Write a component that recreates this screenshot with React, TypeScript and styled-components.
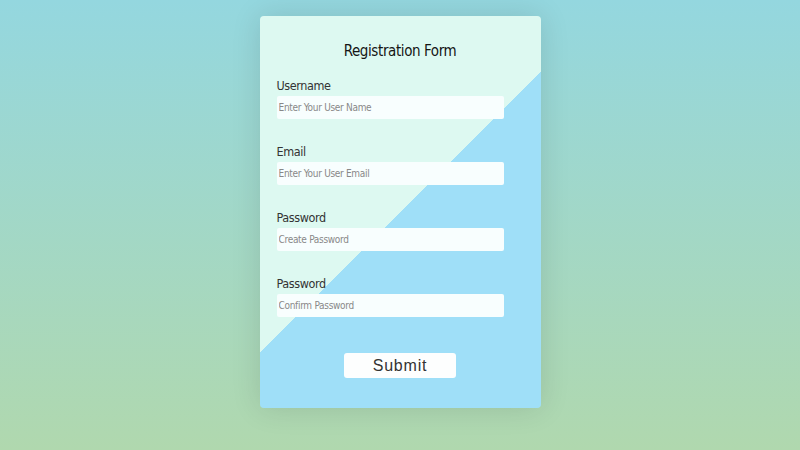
import React from 'react'
import styled, { createGlobalStyle } from 'styled-components'

const Global = createGlobalStyle`
    html, body { margin: 0; padding: 0; }
    body {
        height: 450px;
        background: linear-gradient( #94d7df, #b0d8ae );
        font-family: "DejaVu Sans Condensed", "Liberation Sans", sans-serif;
    }
`

const Page = styled.div`
    height: 450px;
    display: flex;
    justify-content: center;
    align-items: flex-start;
    padding-top: 16px;
    box-sizing: border-box;
`

const Card = styled.form`
    width: 281px; height: 392px;
    box-sizing: border-box;
    padding: 25px 37px 0 17px;
    border-radius: 4px;
    background: linear-gradient( 135deg, #ddf9f1 50%, #9fdff8 50% );
    box-shadow: 0 0 30px rgba( 0, 0, 0, 0.12 );
    display: flex;
    flex-direction: column;
`

const Title = styled.h1`
    margin: 0 0 17px 20px;
    text-align: center;
    font-size: 15px;
    line-height: 20px;
    letter-spacing: -0.4px;
    font-weight: normal;
    color: #151515;
`

const Field = styled.div`
    display: flex;
    flex-direction: column;
    gap: 2px;
    margin-bottom: 25px;
`

const Label = styled.label`
    font-size: 12.5px;
    letter-spacing: -0.4px;
    color: #333;
    line-height: 16px;
`

const Input = styled.input`
    height: 23px;
    width: 227px;
    box-sizing: border-box;
    border: none;
    border-radius: 2px;
    background: #f8fefe;
    padding: 0 2px;
    font-family: inherit;
    font-size: 10px;
    letter-spacing: -0.3px;
    outline: none;
    &::placeholder { color: #888; }
`

const Submit = styled.button`
    align-self: center;
    margin: 11px 0 0 20px;
    width: 112px; height: 25px;
    border: none;
    border-radius: 3px;
    background: #fdfefe;
    font-family: "Liberation Sans", Arial, sans-serif;
    font-size: 16px;
    letter-spacing: 0.8px;
    color: #333;
`

const fields = [
    { label: 'Username', placeholder: 'Enter Your User Name', type: 'text' },
    { label: 'Email', placeholder: 'Enter Your User Email', type: 'email' },
    { label: 'Password', placeholder: 'Create Password', type: 'password' },
    { label: 'Password', placeholder: 'Confirm Password', type: 'password' },
]

export default function App() {
    return <>
        <Global />
        <Page>
            <Card onSubmit={ e => e.preventDefault() }>
                <Title>Registration Form</Title>
                { fields.map( ( f, i ) => <Field key={ i }>
                    <Label>{ f.label }</Label>
                    <Input type={ f.type } placeholder={ f.placeholder } />
                </Field> ) }
                <Submit type="submit">Submit</Submit>
            </Card>
        </Page>
    </>
}
